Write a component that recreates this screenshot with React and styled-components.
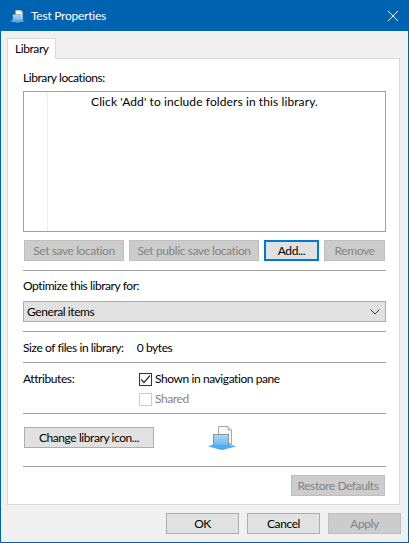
import React from "react"
import styled, { createGlobalStyle } from "styled-components"

const GlobalStyle = createGlobalStyle`
  html, body {
    margin: 0;
    padding: 0;
    background: #f0f0f0;
  }
  * {
    box-sizing: border-box;
  }
`

const Window = styled.div`
  display: flex;
  flex-direction: column;
  width: 409px;
  height: 543px;
  border: 1px solid #0063b1;
  background-color: #f0f0f0;
  color: #000;
  font-family: "Lato", "Open Sans", sans-serif;
  font-size: 12px;
  line-height: 16px;
  letter-spacing: -0.42px;
`

const TitleBar = styled.div`
  display: flex;
  align-items: center;
  flex: 0 0 30px;
  padding: 0 10px 0 9px;
  background-color: #0063b1;
  color: #fff;
`

const TitleText = styled.div`
  flex: 1;
  margin: 0 0 0 6px;
  font-size: 12px;
  letter-spacing: -0.25px;
`

const Body = styled.div`
  display: flex;
  flex-direction: column;
  padding: 7px 0 0 6px;
`

const Tab = styled.div`
  position: relative;
  z-index: 1;
  width: 49px;
  height: 21px;
  margin-bottom: -1px;
  padding: 2px 0 0 7px;
  background-color: #fff;
  border: 1px solid #d9d9d9;
  border-bottom: 0;
`

const Panel = styled.div`
  display: flex;
  flex-direction: column;
  width: 393px;
  height: 447px;
  padding: 11px 13px 0 15px;
  background-color: #fff;
  border: 1px solid #d9d9d9;
`

const Label = styled.div`
  height: 16px;
  margin-bottom: ${ props => props.$bottom || 0 }px;
  white-space: nowrap;
`

const LocationList = styled.div`
  height: 141px;
  margin-bottom: 8px;
  padding-top: 2px;
  text-align: center;
  letter-spacing: 0.1px;
  border: 1px solid #a0a0a0;
  background: linear-gradient(to right, transparent 23px, #e6f0fa 23px, #e6f0fa 24px, transparent 24px);
`

const Row = styled.div`
  display: flex;
  align-items: center;
  justify-content: ${ props => props.$justify || "flex-start" };
  gap: ${ props => props.$gap || 0 }px;
  margin-top: ${ props => props.$top || 0 }px;
  padding: 0 ${ props => props.$right || 0 }px 0 ${ props => props.$left || 0 }px;
`

const Button = styled.div`
  display: flex;
  justify-content: center;
  align-items: center;
  flex: 0 0 ${ props => props.$width }px;
  height: 21px;
  white-space: nowrap;
  background-color: ${ props => props.$disabled ? "#cccccc" : "#e1e1e1" };
  color: ${ props => props.$disabled ? "#838383" : "#000" };
  border: ${ props => props.$focused ? "2px solid #0078d7" : props.$disabled ? "1px solid #bfbfbf" : "1px solid #adadad" };
`

const Rule = styled.div`
  height: 1px;
  margin: ${ props => props.$top }px 0 ${ props => props.$bottom }px;
  background-color: #a0a0a0;
`

const Select = styled.div`
  display: flex;
  justify-content: space-between;
  align-items: center;
  height: 21px;
  padding: 0 5px 0 3px;
  background-color: #e1e1e1;
  border: 1px solid #adadad;
`

const SizeValue = styled.div`
  margin-left: 13px;
`

const AttributeGrid = styled.div`
  display: grid;
  grid-template-columns: 116px 1fr;
  grid-auto-rows: 16px;
  row-gap: 4px;
`

const CheckRow = styled.div`
  display: flex;
  align-items: center;
  gap: 3px;
  color: ${ props => props.$disabled ? "#838383" : "#000" };
`

const CheckBox = styled.div`
  display: flex;
  justify-content: center;
  align-items: center;
  width: 13px;
  height: 13px;
  background-color: #fff;
  border: 1px solid ${ props => props.$disabled ? "#cccccc" : "#333333" };
`

const IconSlot = styled.div`
  display: flex;
  align-self: flex-start;
  margin: -1px 0 -2px 54px;
`

const CloseIcon = () => (
  <svg width="10" height="10" viewBox="0 0 10 10" fill="none">
    <path d="M0 0L10 10M10 0L0 10" stroke="#fff" strokeWidth="1" />
  </svg>
)

const ChevronIcon = () => (
  <svg width="10" height="6" viewBox="0 0 10 6" fill="none">
    <path d="M0.5 0.5L5 5L9.5 0.5" stroke="#333" strokeWidth="1" />
  </svg>
)

const CheckIcon = () => (
  <svg width="11" height="11" viewBox="0 0 11 11" fill="none">
    <path d="M1 5.5L4 8.5L10 1.5" stroke="#333" strokeWidth="1.2" />
  </svg>
)

const LibraryIcon = ({ width, height, id }) => (
  <svg width={ width } height={ height } viewBox="0 0 28 24">
    <defs>
      <linearGradient id={ `${ id }-screen` } x1="0" y1="0" x2="0" y2="1">
        <stop offset="0" stopColor="#a6d8fd" />
        <stop offset="1" stopColor="#6db8f8" />
      </linearGradient>
      <linearGradient id={ `${ id }-base` } x1="0" y1="0" x2="0" y2="1">
        <stop offset="0" stopColor="#6cc6f8" />
        <stop offset="1" stopColor="#3a9fee" />
      </linearGradient>
    </defs>
    <path d="M0 20.5L8 17H20L28 20.5L14 24Z" fill={ `url(#${ id }-base)` } />
    <path d="M10.5 0.5H20L23.5 4V17.5H10.5Z" fill="#f7f7f7" stroke="#a8a8a8" />
    <path d="M20 0.5V4H23.5" fill="#e6e6e6" stroke="#a8a8a8" />
    <rect x="5.5" y="8.5" width="15" height="11" fill={ `url(#${ id }-screen)` } stroke="#8e9298" />
  </svg>
)

function App() {
  return (
    <Window>
      <GlobalStyle />
      <TitleBar>
        <LibraryIcon width={ 15 } height={ 13 } id="title" />
        <TitleText>Test Properties</TitleText>
        <CloseIcon />
      </TitleBar>
      <Body>
        <Tab>Library</Tab>
        <Panel>
          <Label $bottom={ 5 }>Library locations:</Label>
          <LocationList>Click 'Add' to include folders in this library.</LocationList>
          <Row $gap={ 5 } $left={ 1 }>
            <Button $width={ 100 } $disabled>Set save location</Button>
            <Button $width={ 130 } $disabled>Set public save location</Button>
            <Button $width={ 55 } $focused>Add...</Button>
            <Button $width={ 61 } $disabled>Remove</Button>
          </Row>
          <Rule $top={ 9 } $bottom={ 7 } />
          <Label $bottom={ 7 }>Optimize this library for:</Label>
          <Select>
            General items
            <ChevronIcon />
          </Select>
          <Rule $top={ 9 } $bottom={ 8 } />
          <Row>
            <Label>Size of files in library:</Label>
            <SizeValue>0 bytes</SizeValue>
          </Row>
          <Rule $top={ 6 } $bottom={ 8 } />
          <AttributeGrid>
            <Label>Attributes:</Label>
            <CheckRow>
              <CheckBox><CheckIcon /></CheckBox>
              Shown in navigation pane
            </CheckRow>
            <div />
            <CheckRow $disabled>
              <CheckBox $disabled />
              Shared
            </CheckRow>
          </AttributeGrid>
          <Rule $top={ 6 } $bottom={ 13 } />
          <Row $left={ 1 }>
            <Button $width={ 130 }>Change library icon...</Button>
            <IconSlot>
              <LibraryIcon width={ 28 } height={ 24 } id="large" />
            </IconSlot>
          </Row>
          <Rule $top={ 18 } $bottom={ 8 } />
          <Row $justify="flex-end" $right={ 1 }>
            <Button $width={ 94 } $disabled>Restore Defaults</Button>
          </Row>
        </Panel>
        <Row $gap={ 8 } $left={ 159 } $top={ 8 }>
          <Button $width={ 73 }>OK</Button>
          <Button $width={ 73 }>Cancel</Button>
          <Button $width={ 73 } $disabled>Apply</Button>
        </Row>
      </Body>
    </Window>
  )
}

export default App
